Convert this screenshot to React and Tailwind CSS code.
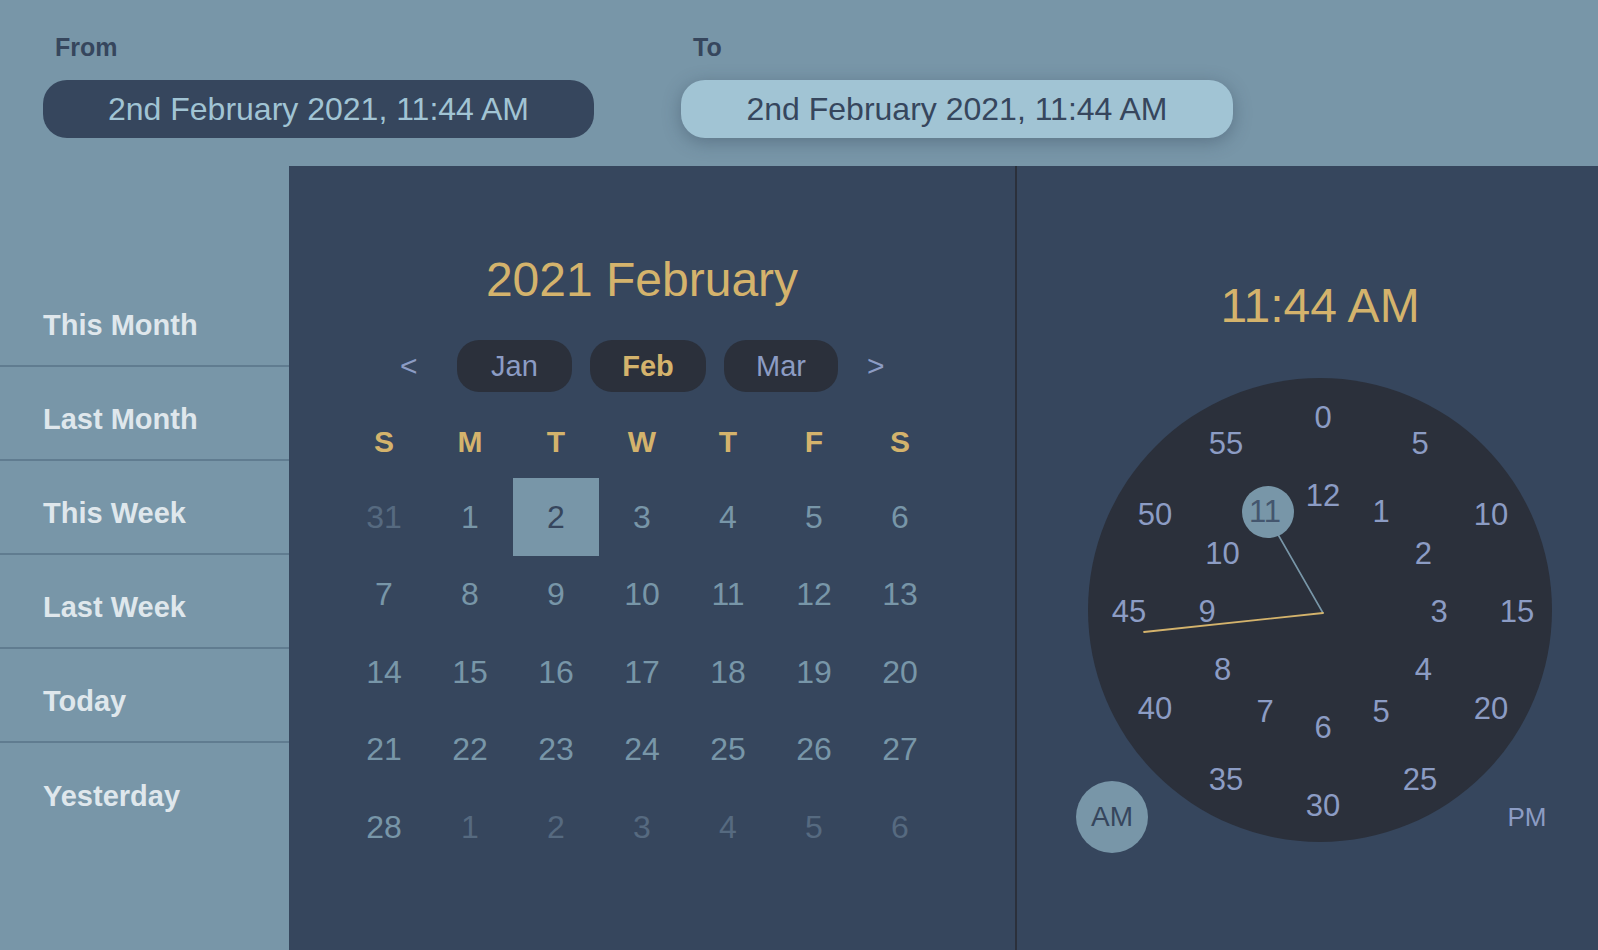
import React from "react";

const CX = 235;
const CY = 233;
const HOUR_R = 116;
const MIN_R = 194;

function pos(i, r) {
  const a = (i * Math.PI) / 6;
  return { left: CX + r * Math.sin(a), top: CY - r * Math.cos(a) };
}

const weeks = [
  [31, 1, 2, 3, 4, 5, 6],
  [7, 8, 9, 10, 11, 12, 13],
  [14, 15, 16, 17, 18, 19, 20],
  [21, 22, 23, 24, 25, 26, 27],
  [28, 1, 2, 3, 4, 5, 6],
];

const sideItems = ["This Month", "Last Month", "This Week", "Last Week", "Today", "Yesterday"];
const weekdays = ["S", "M", "T", "W", "T", "F", "S"];

function DateField({ label, value, light }) {
  return (
    <div className="flex flex-col">
      <div className="h-[26px] pl-[12px] text-[25px] font-bold leading-[26px] text-[#36465d]">{label}</div>
      <div
        className={
          light
            ? "mt-[20px] flex h-[58px] items-center justify-center rounded-[24px] bg-[#a1c4d4] text-[32px] leading-none text-[#36465d] shadow-[0_4px_18px_rgba(40,55,75,0.35)]"
            : "mt-[20px] flex h-[58px] items-center justify-center rounded-[24px] bg-[#36465d] text-[32px] leading-none text-[#a1c4d4]"
        }
      >
        {value}
      </div>
    </div>
  );
}

function Calendar() {
  return (
    <div className="flex w-[726px] flex-col items-center bg-[#36465d] pr-[20px]">
      <div className="mt-[90px] h-[48px] text-[48px] leading-none text-[#d4b36c]">2021 February</div>
      <div className="mt-[36px] flex h-[52px] items-center">
        <span className="w-[16px] text-[30px] leading-none text-[#8c9cc4]">&lt;</span>
        <div className="ml-[41px] flex h-[52px] w-[115px] items-center justify-center rounded-[22px] bg-[#2b303b] text-[29px] leading-none text-[#8c9cc4]">
          Jan
        </div>
        <div className="ml-[18px] flex h-[52px] w-[116px] items-center justify-center rounded-[22px] bg-[#2b303b] text-[29px] font-bold leading-none text-[#d4b36c]">
          Feb
        </div>
        <div className="ml-[18px] flex h-[52px] w-[114px] items-center justify-center rounded-[22px] bg-[#2b303b] text-[29px] leading-none text-[#8c9cc4]">
          Mar
        </div>
        <span className="ml-[29px] w-[17px] text-[30px] leading-none text-[#8c9cc4]">&gt;</span>
      </div>
      <div className="mt-[14px] grid h-[72px] w-[602px] grid-cols-7">
        {weekdays.map((d, i) => (
          <div key={i} className="flex items-center justify-center text-[30px] font-bold leading-none text-[#d4b36c]">
            {d}
          </div>
        ))}
      </div>
      <div className="flex w-[602px] flex-col">
        {weeks.map((week, wi) => (
          <div key={wi} className="grid h-[77.5px] grid-cols-7">
            {week.map((d, di) => {
              const muted = (wi === 0 && d > 20) || (wi === 4 && d < 20);
              const selected = wi === 0 && d === 2;
              return (
                <div
                  key={di}
                  className={
                    selected
                      ? "flex items-center justify-center bg-[#7896a8] text-[32px] leading-none text-[#36465d]"
                      : muted
                      ? "flex items-center justify-center text-[32px] leading-none text-[#566a80]"
                      : "flex items-center justify-center text-[32px] leading-none text-[#7896a8]"
                  }
                >
                  {d}
                </div>
              );
            })}
          </div>
        ))}
      </div>
    </div>
  );
}

function Clock() {
  const minutes = Array.from({ length: 12 }, (_, i) => i);
  const hours = Array.from({ length: 12 }, (_, i) => i + 1);
  const h11 = pos(11, HOUR_R);
  return (
    <div className="flex flex-1 flex-col items-center bg-[#36465d] pl-[25px]">
      <div className="mt-[116px] h-[48px] text-[48px] leading-none text-[#d4b36c]">11:44 AM</div>
      <div className="relative mt-[48px] h-[464px] w-[464px] rounded-full bg-[#2b303b]">
        {minutes.map((i) => {
          const p = pos(i, MIN_R);
          return (
            <span
              key={"m" + i}
              className="absolute -translate-x-1/2 -translate-y-1/2 text-[31px] leading-none text-[#8c9cc4]"
              style={{ left: p.left, top: p.top }}
            >
              {i * 5}
            </span>
          );
        })}
        <div
          className="absolute h-[52px] w-[52px] -translate-x-1/2 -translate-y-1/2 rounded-full bg-[#7896a8]"
          style={{ left: h11.left + 3, top: h11.top + 1 }}
        />
        {hours.map((h) => {
          const p = pos(h, HOUR_R);
          return (
            <span
              key={"h" + h}
              className={
                h === 11
                  ? "absolute -translate-x-1/2 -translate-y-1/2 text-[31px] leading-none text-[#44566e]"
                  : "absolute -translate-x-1/2 -translate-y-1/2 text-[31px] leading-none text-[#8c9cc4]"
              }
              style={{ left: p.left, top: p.top }}
            >
              {h}
            </span>
          );
        })}
        <svg className="pointer-events-none absolute left-0 top-0" width="464" height="464" viewBox="0 0 464 464">
          <line x1="235" y1="235" x2="184" y2="146" stroke="#7896a8" strokeWidth="1.6" strokeLinecap="round" />
          <line x1="235" y1="235" x2="56" y2="254" stroke="#d4b36c" strokeWidth="1.8" strokeLinecap="round" />
        </svg>
        <div className="absolute left-[-12px] top-[403px] flex h-[72px] w-[72px] items-center justify-center rounded-full bg-[#7896a8] text-[28px] leading-none text-[#36465d]">
          AM
        </div>
        <span className="absolute left-[439px] top-[439px] -translate-x-1/2 -translate-y-1/2 text-[26px] leading-none text-[#8c9cc4]">
          PM
        </span>
      </div>
    </div>
  );
}

export default function App() {
  return (
    <div className="flex h-[950px] w-full flex-col overflow-hidden bg-[#7896a8] font-['Liberation_Sans',Arial,sans-serif]">
      <div className="flex h-[166px] gap-[87px] pl-[43px] pt-[34px]">
        <div className="w-[551px]">
          <DateField label="From" value="2nd February 2021, 11:44 AM" />
        </div>
        <div className="w-[552px]">
          <DateField label="To" value="2nd February 2021, 11:44 AM" light />
        </div>
      </div>
      <div className="flex h-[784px]">
        <div className="flex w-[289px] flex-col pt-[107px]">
          {sideItems.map((t, i) => (
            <div
              key={t}
              className={
                i < sideItems.length - 1
                  ? "flex h-[94px] items-center border-b-2 border-[#607c90] pl-[43px] pt-[12px] text-[29px] font-bold leading-none text-[#dfe7ec]"
                  : "flex h-[94px] items-center pl-[43px] pt-[12px] text-[29px] font-bold leading-none text-[#dfe7ec]"
              }
            >
              {t}
            </div>
          ))}
        </div>
        <Calendar />
        <div className="w-[2px] bg-[#2b303b]" />
        <Clock />
      </div>
    </div>
  );
}
